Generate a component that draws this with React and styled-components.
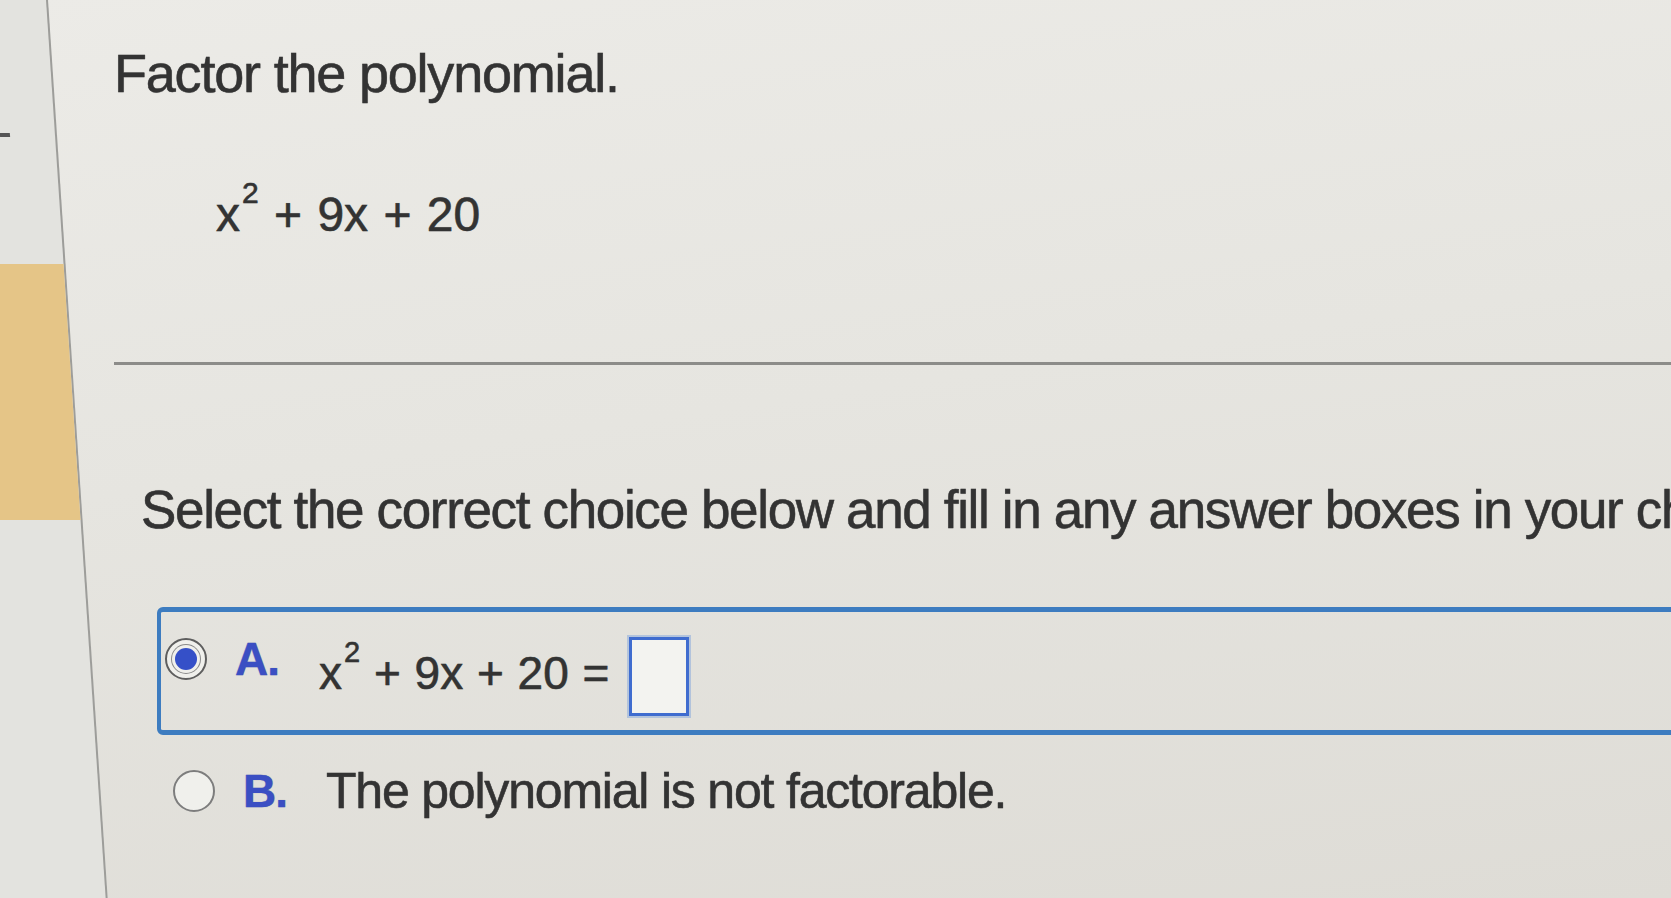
import React from 'react';
import styled, { createGlobalStyle } from 'styled-components';

const GlobalStyle = createGlobalStyle`
  html, body {
    margin: 0;
    padding: 0;
    height: 100%;
    overflow: hidden;
  }

  body {
    background: linear-gradient(172deg, #ecebe7 0%, #e6e5e0 45%, #dedcd6 100%);
    font-family: 'Liberation Sans', Arial, sans-serif;
    color: #303030;
  }
`;

const Page = styled.div`
  display: flex;
  height: 100vh;
  overflow: hidden;
`;

// the photo looks at the screen at an angle, so the side panel edge leans
const Sidebar = styled.aside`
  flex: none;
  display: flex;
  flex-direction: column;
  width: 116px;
  margin-left: -70px;
  border-right: 2px solid #9d9d9a;
  background: #e3e3df;
  transform: skewX(3.8deg);
  transform-origin: top left;
`;

const Tick = styled.span`
  display: block;
  width: 10px;
  height: 4px;
  margin: 133px 0 0 61px;
  background: #555;
`;

const Highlight = styled.div`
  height: 256px;
  margin-top: 127px;
  background: #e5c587;
`;

const Main = styled.main`
  flex: 1;
  min-width: 0;
  padding: 41px 0 0 66px;
  overflow: hidden;
  color: #333;
  -webkit-text-stroke: 0.5px #333;
  text-shadow: 0 0 1px rgba(40, 40, 40, 0.4);
`;

const Title = styled.h1`
  margin: 0;
  font-size: 54px;
  line-height: 64px;
  font-weight: 400;
  letter-spacing: -1.2px;
  white-space: nowrap;
`;

const Expression = styled.div`
  margin: 82px 0 0 102px;
  font-size: 48px;
  line-height: 56px;
  word-spacing: 2px;
  white-space: nowrap;
`;

const Sup = styled.sup`
  font-size: ${p => p.$size || 30}px;
  line-height: 0;
  vertical-align: ${p => p.$raise || 28}px;
  margin-left: 2px;
`;

const Rule = styled.hr`
  margin: 119px 0 0;
  border: 0;
  height: 3px;
  background: #8c8c89;
`;

const Prompt = styled.p`
  margin: 114px 0 0 27px;
  font-size: 53px;
  line-height: 62px;
  letter-spacing: -1.35px;
  white-space: nowrap;
`;

const ChoiceBox = styled.div`
  display: flex;
  align-items: flex-start;
  box-sizing: border-box;
  height: 128px;
  margin: 66px -40px 0 43px;
  border: 4px solid #3d7cc0;
  border-width: 5px 4px 5px 4px;
  border-radius: 6px;
`;

const ChoiceRow = styled.div`
  display: flex;
  align-items: center;
  margin: 27px 0 0 59px;
`;

const Radio = styled.span`
  flex: none;
  display: flex;
  align-items: center;
  justify-content: center;
  box-sizing: border-box;
  width: 42px;
  height: 42px;
  margin: ${p => p.$mt || 0}px 0 0 ${p => p.$ml || 0}px;
  border-radius: 50%;
  border: 2px solid ${p => (p.$checked ? '#5e5e5e' : '#7d7d7d')};
  background: #f0f0ec;
`;

const Dot = styled.span`
  width: 22px;
  height: 22px;
  border-radius: 50%;
  background: #3550c8;
  box-shadow: 0 0 0 3px #f0f0ec, 0 0 0 4px #8a8a8a;
`;

const Letter = styled.span`
  flex: none;
  margin: ${p => p.$mt || 0}px 0 0 28px;
  font-size: 46px;
  line-height: 46px;
  font-weight: 700;
  letter-spacing: -1px;
  color: #3b4fc3;
  -webkit-text-stroke: 0.3px #3b4fc3;
`;

const InlineMath = styled.span`
  flex: none;
  margin: 35px 0 0 40px;
  font-size: 46px;
  line-height: 52px;
  word-spacing: 1px;
  white-space: nowrap;
`;

const AnswerBox = styled.span`
  flex: none;
  box-sizing: border-box;
  width: 60px;
  height: 79px;
  margin: 25px 0 0 20px;
  border: 3px solid #3f6ccf;
  box-shadow: 0 0 0 2px rgba(90, 140, 220, 0.35);
  background: #f3f3f0;
`;

const ChoiceText = styled.span`
  margin-left: 39px;
  font-size: 50px;
  line-height: 58px;
  letter-spacing: -1.2px;
  white-space: nowrap;
`;

export default function App() {
  return (
    <Page>
      <GlobalStyle />
      <Sidebar>
        <Tick />
        <Highlight />
      </Sidebar>
      <Main>
        <Title>Factor the polynomial.</Title>
        <Expression>
          x<Sup>2</Sup> + 9x + 20
        </Expression>
        <Rule />
        <Prompt>
          Select the correct choice below and fill in any answer boxes in your choice.
        </Prompt>
        <ChoiceBox>
          <Radio $checked $mt={26} $ml={4}>
            <Dot />
          </Radio>
          <Letter $mt={24}>A.</Letter>
          <InlineMath>
            x<Sup $size={29} $raise={27}>2</Sup> + 9x + 20 =
          </InlineMath>
          <AnswerBox />
        </ChoiceBox>
        <ChoiceRow>
          <Radio />
          <Letter>B.</Letter>
          <ChoiceText>The polynomial is not factorable.</ChoiceText>
        </ChoiceRow>
      </Main>
    </Page>
  );
}
